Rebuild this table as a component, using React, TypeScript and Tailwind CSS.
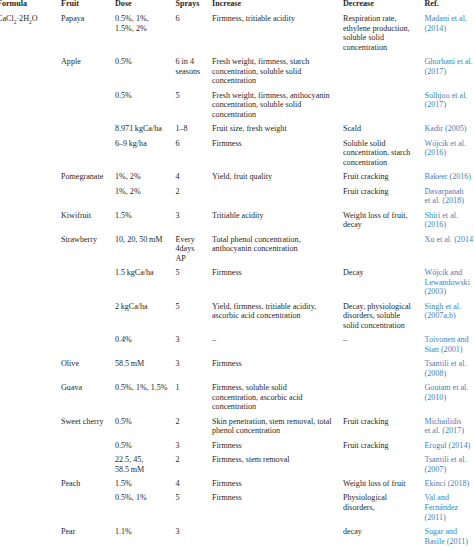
import React from "react";

type Cell = string | string[] | React.ReactNode;

interface Row {
  formula?: React.ReactNode;
  fruit?: string;
  dose?: Cell;
  sprays?: Cell;
  inc?: Cell;
  dec?: Cell;
  refs?: Cell;
}

const rows: Row[] = [
  {
    formula: (
      <span>
        CaCl<sub className="text-[5.5px] align-[-1.5px]">2</sub>·2H<sub className="text-[5.5px] align-[-1.5px]">2</sub>O
      </span>
    ),
    fruit: "Papaya",
    dose: ["0.5%, 1%,", "1.5%, 2%"],
    sprays: "6",
    inc: "Firmness, tritiable acidity",
    dec: ["Respiration rate,", "ethylene production,", "soluble solid", "concentration"],
    refs: ["Madani et al.", "(2014)"],
  },
  {
    fruit: "Apple",
    dose: "0.5%",
    sprays: ["6 in 4", "seasons"],
    inc: ["Fresh weight, firmness, starch", "concentration, soluble solid", "concentration"],
    refs: ["Ghorbani et al.", "(2017)"],
  },
  {
    dose: "0.5%",
    sprays: "5",
    inc: ["Fresh weight, firmness, anthocyanin", "concentration, soluble solid", "concentration"],
    refs: ["Solhjoo et al.", "(2017)"],
  },
  {
    dose: "8.971\u2009kgCa/ha",
    sprays: "1–8",
    inc: "Fruit size, fresh weight",
    dec: "Scald",
    refs: "Kadir (2005)",
  },
  {
    dose: "6–9\u2009kg/ha",
    sprays: "6",
    inc: "Firmness",
    dec: ["Soluble solid", "concentration, starch", "concentration"],
    refs: ["Wójcik et al.", "(2016)"],
  },
  {
    fruit: "Pomegranate",
    dose: "1%, 2%",
    sprays: "4",
    inc: "Yield, fruit quality",
    dec: "Fruit cracking",
    refs: "Bakeer (2016)",
  },
  {
    dose: "1%, 2%",
    sprays: "2",
    dec: "Fruit cracking",
    refs: ["Davarpanah", "et al. (2018)"],
  },
  {
    fruit: "Kiwifruit",
    dose: "1.5%",
    sprays: "3",
    inc: "Tritiable acidity",
    dec: ["Weight loss of fruit,", "decay"],
    refs: ["Shiri et al.", "(2016)"],
  },
  {
    fruit: "Strawberry",
    dose: "10, 20, 50\u2009mM",
    sprays: ["Every", "4days", "AP"],
    inc: ["Total phenol concentration,", "anthocyanin concentration"],
    refs: "Xu et al. (2014)",
  },
  {
    dose: "1.5\u2009kgCa/ha",
    sprays: "5",
    inc: "Firmness",
    dec: "Decay",
    refs: ["Wójcik and", "Lewandowski", "(2003)"],
  },
  {
    dose: "2\u2009kgCa/ha",
    sprays: "5",
    inc: ["Yield, firmness, tritiable acidity,", "ascorbic acid concentration"],
    dec: ["Decay, physiological", "disorders, soluble", "solid concentration"],
    refs: ["Singh et al.", "(2007a,b)"],
  },
  {
    dose: "0.4%",
    sprays: "3",
    inc: "–",
    dec: "–",
    refs: ["Toivonen and", "Stan (2001)"],
  },
  {
    fruit: "Olive",
    dose: "58.5\u2009mM",
    sprays: "3",
    inc: "Firmness",
    refs: ["Tsantili et al.", "(2008)"],
  },
  {
    fruit: "Guava",
    dose: "0.5%, 1%, 1.5%",
    sprays: "1",
    inc: ["Firmness, soluble solid", "concentration, ascorbic acid", "concentration"],
    refs: ["Goutam et al.", "(2010)"],
  },
  {
    fruit: "Sweet cherry",
    dose: "0.5%",
    sprays: "2",
    inc: ["Skin penetration, stem removal, total", "phenol concentration"],
    dec: "Fruit cracking",
    refs: ["Michailidis", "et al. (2017)"],
  },
  {
    dose: "0.5%",
    sprays: "3",
    inc: "Firmness",
    dec: "Fruit cracking",
    refs: "Erogul (2014)",
  },
  {
    dose: ["22.5, 45,", "58.5\u2009mM"],
    sprays: "2",
    inc: "Firmness, stem removal",
    refs: ["Tsantili et al.", "(2007)"],
  },
  {
    fruit: "Peach",
    dose: "1.5%",
    sprays: "4",
    inc: "Firmness",
    dec: "Weight loss of fruit",
    refs: "Ekinci (2018)",
  },
  {
    dose: "0.5%, 1%",
    sprays: "5",
    inc: "Firmness",
    dec: ["Physiological", "disorders,"],
    refs: ["Val and", "Fernández", "(2011)"],
  },
  {
    fruit: "Pear",
    dose: "1.1%",
    sprays: "3",
    dec: "decay",
    refs: ["Sugar and", "Basile (2011)"],
  },
];

function Lines({ v }: { v: Cell }) {
  if (v === undefined || v === null) return null;
  if (Array.isArray(v)) {
    return (
      <>
        {v.map((l, i) => (
          <div key={i} className="whitespace-nowrap">
            {l}
          </div>
        ))}
      </>
    );
  }
  return <div className="whitespace-nowrap">{v}</div>;
}

const grid =
  "grid grid-cols-[64px_54px_60.5px_36.5px_131px_81.5px_70px]";

export default function App() {
  return (
    <div
      className="w-[474px] h-[550px] overflow-hidden bg-white text-[#1f1f1f] text-[8.1px] leading-[9.6px]"
      style={{ fontFamily: '"Liberation Serif", "Times New Roman", serif' }}
    >
      <div className="ml-[-3px] w-[500px]">
        <div className={`${grid} font-bold -mt-[1px] pb-[3px]`}>
          <div>Formula</div>
          <div>Fruit</div>
          <div>Dose</div>
          <div>Sprays</div>
          <div>Increase</div>
          <div>Decrease</div>
          <div>Ref.</div>
        </div>
        {rows.map((r, i) => (
          <div key={i} className={`${grid} py-[2.4px]`}>
            <div className="whitespace-nowrap">{r.formula}</div>
            <div className="whitespace-nowrap">{r.fruit}</div>
            <div>
              <Lines v={r.dose} />
            </div>
            <div>
              <Lines v={r.sprays} />
            </div>
            <div>
              <Lines v={r.inc} />
            </div>
            <div>
              <Lines v={r.dec} />
            </div>
            <div className="text-[#3f7fc0]">
              <Lines v={r.refs} />
            </div>
          </div>
        ))}
      </div>
    </div>
  );
}
